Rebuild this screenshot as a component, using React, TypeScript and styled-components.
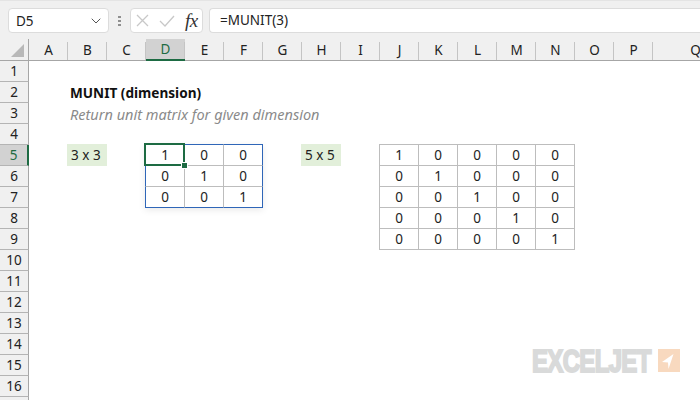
import styled, { createGlobalStyle } from 'styled-components'
import { ChevronDown } from 'lucide-react'

const UI_FONT = '"Noto Sans", "Open Sans", sans-serif'

const GlobalStyle = createGlobalStyle`
  html, body {
    margin: 0;
    width: 700px;
    height: 400px;
    overflow: hidden;
    background: #fff;
    font-family: ${UI_FONT};
  }
`

const Window = styled.div`
  position: relative;
  width: 700px;
  height: 400px;
  overflow: hidden;
  background: #fff;
`

const FormulaBar = styled.div`
  display: flex;
  align-items: flex-start;
  height: 39px;
  padding: 7px 0 0 8px;
  box-sizing: border-box;
  background: #f0f0f0;
  border-top: 1px solid #e4e4e4;
`

const NameBox = styled.div`
  display: flex;
  align-items: center;
  justify-content: space-between;
  width: 101px;
  height: 25px;
  box-sizing: border-box;
  padding: 0 4px 0 7px;
  background: #fff;
  border: 1px solid #dcdcdc;
  border-radius: 4px;
  font-size: 13.5px;
  color: #222;
`

const Dots = styled.div`
  display: flex;
  flex-direction: column;
  gap: 2px;
  margin: 8px 9px 0 9px;
  & i {
    width: 3px;
    height: 2px;
    background: #8f8f8f;
  }
`

const FxBox = styled.div`
  display: flex;
  align-items: center;
  width: 73px;
  height: 25px;
  box-sizing: border-box;
  padding-left: 5px;
  background: #fff;
  border: 1px solid #dcdcdc;
  border-radius: 4px;
`

const Fx = styled.span`
  margin-left: 10px;
  font-family: "Liberation Serif", serif;
  font-style: italic;
  font-size: 19px;
  line-height: 20px;
  color: #333;
  letter-spacing: -0.5px;
`

const FormulaInput = styled.div`
  flex: 1;
  height: 25px;
  box-sizing: border-box;
  margin-left: 6px;
  padding: 2px 0 0 10px;
  background: #fff;
  border: 1px solid #dcdcdc;
  border-right: 0;
  border-radius: 4px 0 0 4px;
  font-size: 13.5px;
  color: #222;
`

const Sheet = styled.div`
  display: grid;
  grid-template-columns: 29px repeat(16, 39px) 85px;
  grid-template-rows: 22px repeat(17, 21px);
`

const Corner = styled.div`
  position: relative;
  background: #f0f0f0;
  border-right: 1px solid #a6a6a6;
  border-bottom: 1px solid #a6a6a6;
  &::after {
    content: '';
    position: absolute;
    right: 4px;
    bottom: 3px;
    border-style: solid;
    border-width: 0 0 13px 13px;
    border-color: transparent transparent #b8b8b8 transparent;
  }
`

const ColHeader = styled.div<{ $active?: boolean }>`
  display: flex;
  align-items: center;
  justify-content: center;
  box-sizing: border-box;
  font-size: 13.5px;
  color: ${(p) => (p.$active ? '#1d6b43' : '#222')};
  background: ${(p) => (p.$active ? '#d2d2d2' : '#f0f0f0')};
  border-bottom: ${(p) => (p.$active ? '2px solid #1d6b43' : '1px solid #a6a6a6')};
  position: relative;
  &::after {
    content: '';
    position: absolute;
    right: 0;
    top: 3px;
    bottom: 0;
    width: 1px;
    background: #c4c4c4;
  }
`

const RowHeader = styled.div<{ $active?: boolean }>`
  display: flex;
  align-items: center;
  justify-content: center;
  box-sizing: border-box;
  font-size: 13.5px;
  color: ${(p) => (p.$active ? '#1d6b43' : '#222')};
  background: ${(p) => (p.$active ? '#d2d2d2' : '#f0f0f0')};
  border-right: ${(p) => (p.$active ? '2px solid #1d6b43' : '1px solid #a6a6a6')};
  border-bottom: 1px solid #b4b4b4;
`

const Cell = styled.div`
  min-width: 0;
  white-space: nowrap;
`

const Title = styled.div`
  padding-left: 2px;
  font-size: 13.6px;
  line-height: 21px;
  font-weight: 700;
  color: #111;
`

const Subtitle = styled.div`
  padding-left: 2px;
  font-size: 14.5px;
  line-height: 22px;
  font-style: italic;
  color: #8a8a8a;
`

const Label = styled.div`
  display: flex;
  align-items: center;
  width: 40px;
  height: 22px;
  margin: -1px 0 0 -1px;
  padding-left: 4px;
  box-sizing: border-box;
  background: #e2efda;
  font-size: 13.5px;
  color: #222;
`

const MatrixCell = styled.div<{ $top: boolean; $left: boolean; $color: string }>`
  display: flex;
  align-items: center;
  justify-content: center;
  height: 22px;
  width: 40px;
  margin: -1px 0 0 -1px;
  box-sizing: border-box;
  border: 1px solid ${(p) => p.$color};
  border-top-color: ${(p) => (p.$top ? p.$color : '#bdbdbd')};
  border-left-color: ${(p) => (p.$left ? p.$color : '#bdbdbd')};
  font-size: 13.5px;
  color: #222;
  background: #fff;
`

const Shadow = styled.div`
  position: absolute;
  left: 145px;
  top: 144px;
  width: 118px;
  height: 64px;
  box-shadow: 0 2px 7px rgba(0, 0, 0, 0.09);
`

const Selection = styled.div`
  position: absolute;
  left: 144px;
  top: 143px;
  width: 41px;
  height: 23px;
  box-sizing: border-box;
  border: 2px solid #1d6b43;
  &::after {
    content: '';
    position: absolute;
    right: -5px;
    bottom: -5px;
    width: 5px;
    height: 5px;
    background: #1d6b43;
    border: 1px solid #fff;
  }
`

const Logo = styled.div`
  position: absolute;
  left: 532px;
  top: 343px;
  display: flex;
  align-items: flex-start;
`

const LogoText = styled.span`
  display: inline-block;
  width: 126px;
  font-family: "Liberation Sans", Arial, sans-serif;
  font-weight: 700;
  font-size: 32px;
  line-height: 36px;
  letter-spacing: -0.9px;
  color: #d9dada;
  -webkit-text-stroke: 2px #d9dada;
  transform: scaleX(0.75);
  transform-origin: left center;
`

const LogoMark = styled.svg`
  margin-top: 6px;
`

const COLS = 'ABCDEFGHIJKLMNOPQ'.split('')
const ROWS = Array.from({ length: 17 }, (_, i) => i + 1)

const D_INDEX = COLS.indexOf('D')
const J_INDEX = COLS.indexOf('J')

const renderCell = (col: number, row: number) => {
  if (col === 1 && row === 2) return <Title>MUNIT (dimension)</Title>
  if (col === 1 && row === 3) return <Subtitle>Return unit matrix for given dimension</Subtitle>
  if (col === 1 && row === 5) return <Label>3 x 3</Label>
  if (col === 7 && row === 5) return <Label>5 x 5</Label>

  const dx = col - D_INDEX
  const dy = row - 5
  if (dx >= 0 && dx < 3 && dy >= 0 && dy < 3) {
    return (
      <MatrixCell $top={dy === 0} $left={dx === 0} $color="#2f66b8">
        {dx === dy ? 1 : 0}
      </MatrixCell>
    )
  }

  const jx = col - J_INDEX
  if (jx >= 0 && jx < 5 && dy >= 0 && dy < 5) {
    return (
      <MatrixCell $top $left $color="#bdbdbd">
        {jx === dy ? 1 : 0}
      </MatrixCell>
    )
  }
  return null
}

const App = () => (
  <Window>
    <GlobalStyle />
    <FormulaBar>
      <NameBox>
        D5
        <ChevronDown size={16} strokeWidth={1.5} color="#555" />
      </NameBox>
      <Dots>
        <i />
        <i />
        <i />
      </Dots>
      <FxBox>
        <svg width="13" height="13" viewBox="0 0 13 13" fill="none" stroke="#c8c8c8" strokeWidth="1.3">
          <path d="M1 1 L12 12 M12 1 L1 12" />
        </svg>
        <svg width="16" height="12" viewBox="0 0 16 12" fill="none" stroke="#c8c8c8" strokeWidth="1.3" style={{ marginLeft: 10 }}>
          <path d="M1 6 L6 11 L15 1" />
        </svg>
        <Fx>fx</Fx>
      </FxBox>
      <FormulaInput>=MUNIT(3)</FormulaInput>
    </FormulaBar>
    <Sheet>
      <Corner />
      {COLS.map((c) => (
        <ColHeader key={c} $active={c === 'D'}>
          {c}
        </ColHeader>
      ))}
      {ROWS.map((r) => [
        <RowHeader key={`h${r}`} $active={r === 5}>
          {r < 17 ? r : null}
        </RowHeader>,
        ...COLS.map((c, i) => <Cell key={`${c}${r}`}>{renderCell(i, r)}</Cell>),
      ])}
    </Sheet>
    <Shadow />
    <Selection />
    <Logo>
      <LogoText>EXCELJET</LogoText>
      <LogoMark width="22" height="23" viewBox="0 0 22 23">
        <rect width="22" height="23" fill="#f8d9bf" />
        <path d="M15.5 5 L4 13 L10 13.5 L10.5 20 Z" fill="#fff" />
      </LogoMark>
    </Logo>
  </Window>
)

export default App
